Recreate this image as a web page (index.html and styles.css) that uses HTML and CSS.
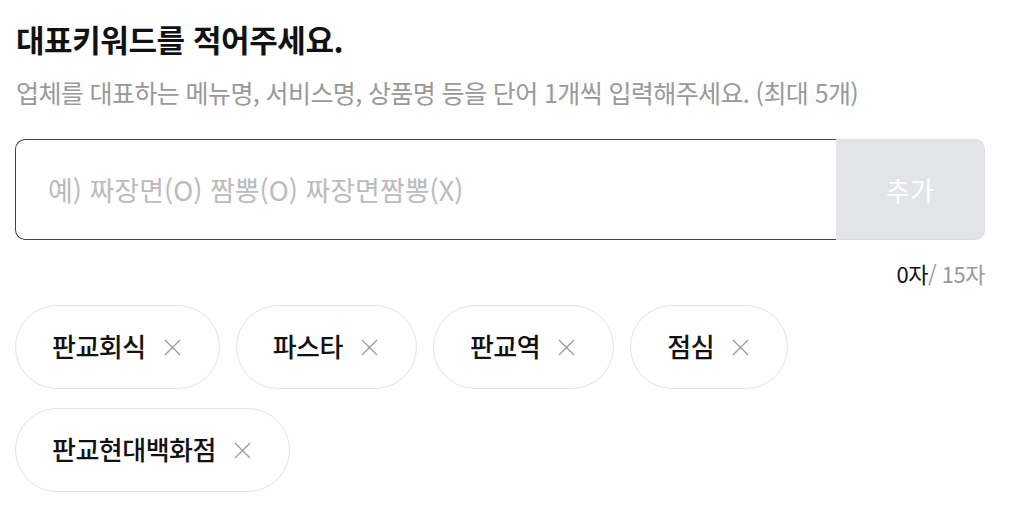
FILE: index.html
```html
<!DOCTYPE html>
<html lang="ko">
<head>
    <meta charset="UTF-8">
    <title>대표키워드</title>
    <link rel="stylesheet" href="styles.css">
</head>
<body>
    <div class="keyword-form">
        <h1 class="title">대표키워드를 적어주세요.</h1>
        <p class="subtitle">업체를 대표하는 메뉴명, 서비스명, 상품명 등을 단어 1개씩 입력해주세요. (최대 5개)</p>

        <div class="input-row">
            <input type="text" class="keyword-input" placeholder="예) 짜장면(O) 짬뽕(O) 짜장면짬뽕(X)">
            <button class="add-btn">추가</button>
        </div>
        <div class="counter"><span class="count">0자</span>/ 15자</div>

        <ul class="chips">
            <li class="chip"><span>판교회식</span><svg class="remove" viewBox="0 0 18 18"><path d="M1 1L17 17M17 1L1 17"/></svg></li>
            <li class="chip"><span>파스타</span><svg class="remove" viewBox="0 0 18 18"><path d="M1 1L17 17M17 1L1 17"/></svg></li>
            <li class="chip"><span>판교역</span><svg class="remove" viewBox="0 0 18 18"><path d="M1 1L17 17M17 1L1 17"/></svg></li>
            <li class="chip"><span>점심</span><svg class="remove" viewBox="0 0 18 18"><path d="M1 1L17 17M17 1L1 17"/></svg></li>
            <li class="chip"><span>판교현대백화점</span><svg class="remove" viewBox="0 0 18 18"><path d="M1 1L17 17M17 1L1 17"/></svg></li>
        </ul>
    </div>
</body>
</html>
```

FILE: styles.css
```css
body {
    margin: 0;
    padding: 0;
    background-color: #fff;
    font-family: "Noto Sans CJK KR", "Noto Sans", sans-serif;
    color: #111;
}
.keyword-form {
    width: 970px;
    padding: 19px 0 0 15px;
}
.title {
    margin: 0;
    font-size: 31px;
    font-weight: 700;
    line-height: 40px;
    letter-spacing: -0.4px;
    padding-left: 1px;
}
.subtitle {
    margin: 16px 0 0 1px;
    font-size: 25px;
    line-height: 34px;
    color: #999;
    letter-spacing: -0.6px;
}
.input-row {
    display: flex;
    margin-top: 30px;
    height: 101px;
}
.keyword-input {
    flex: 1;
    border: 1px solid #444;
    border-right: none;
    border-radius: 10px 0 0 10px;
    padding: 0 0 0 32px;
    font-family: inherit;
    font-size: 27px;
    color: #111;
    outline: none;
}
.keyword-input::placeholder {
    color: #bbb;
}
.add-btn {
    width: 149px;
    border: 1px solid #dcdde1;
    border-left: none;
    border-radius: 0 10px 10px 0;
    background-color: #e3e4e8;
    color: #fff;
    font-family: inherit;
    font-size: 26px;
}
.counter {
    text-align: right;
    margin-top: 19px;
    font-size: 22px;
    line-height: 28px;
    color: #999;
    letter-spacing: -0.5px;
}
.count {
    color: #111;
}
.chips {
    list-style-type: none;
    margin: 18px 0 0 0;
    padding: 0;
    display: flex;
    flex-wrap: wrap;
    gap: 19px 16px;
}
.chip {
    box-sizing: border-box;
    display: flex;
    align-items: center;
    height: 84px;
    padding: 0 38px 4px 36px;
    border: 1px solid #e3e3e3;
    border-radius: 42px;
    font-size: 26px;
    font-weight: 500;
    letter-spacing: -0.5px;
}
.remove {
    width: 17px;
    height: 17px;
    margin: 4px 0 0 18px;
    fill: none;
    stroke: #999;
    stroke-width: 1.3;
    cursor: pointer;
}
```
